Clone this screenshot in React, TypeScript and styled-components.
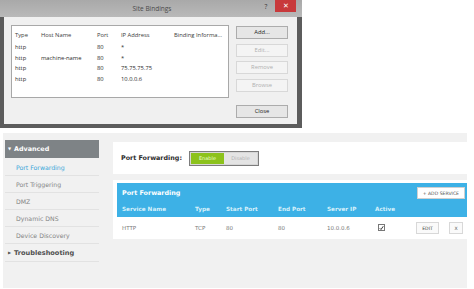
import styled, { createGlobalStyle } from "styled-components";

const Global = createGlobalStyle`
  html, body {
    margin: 0;
    padding: 0;
    background: #ffffff;
  }
  * {
    box-sizing: border-box;
  }
`;

const Page = styled.div`
  width: 474px;
  height: 289px;
  overflow: hidden;
  position: relative;
`;

/* ---------- windows dialog ---------- */

const Dialog = styled.div`
  width: 302px;
  height: 128px;
  background: #5c5c5c;
  padding: 0 5px 4px 4px;
  display: flex;
  flex-direction: column;
  font-family: "Open Sans", "Noto Sans", sans-serif;
`;

const TitleBar = styled.div`
  height: 17px;
  display: flex;
  align-items: flex-start;
  position: relative;
  background: linear-gradient(#a9a9a9, #b9b9b9);
  margin: 0 -5px 0 -4px;
  padding: 0 6px 0 4px;
`;

const Title = styled.div`
  flex: 1;
  text-align: center;
  font-size: 6.5px;
  color: #4a4a4a;
  line-height: 17px;
  padding-left: 40px;
`;

const Help = styled.div`
  width: 12px;
  font-size: 6.5px;
  color: #333;
  line-height: 14px;
  text-align: center;
  margin-right: 3px;
`;

const CloseX = styled.div`
  width: 21px;
  height: 12px;
  background: #c8393b;
  color: #fff;
  font-size: 7px;
  line-height: 12px;
  text-align: center;
`;

const DialogBody = styled.div`
  flex: 1;
  background: #f0f0f0;
  display: flex;
  padding: 8px 0 0 7px;
  gap: 7px;
`;

const ListBox = styled.div`
  width: 218px;
  height: 73px;
  background: #ffffff;
  border: 1px solid #a8a8a8;
  padding: 3px 0 0 3px;
`;

const ListRow = styled.div`
  display: grid;
  grid-template-columns: 26px 56px 24px 53px 1fr;
  height: 10.7px;
  line-height: 10.7px;
  font-size: 5.8px;
  color: #2a2a2a;
  white-space: nowrap;
  &:first-child {
    height: 13px;
    line-height: 13px;
    color: #3a3a3a;
  }
`;

const ButtonCol = styled.div`
  width: 52px;
  display: flex;
  flex-direction: column;
  padding-top: 1px;
`;

const WinButton = styled.div<{ $disabled?: boolean; $gap?: number }>`
  height: 13px;
  margin-bottom: ${(p) => (p.$gap ?? 4.6)}px;
  border: 1px solid ${(p) => (p.$disabled ? "#d8d8d8" : "#acacac")};
  background: ${(p) => (p.$disabled ? "#f4f4f4" : "#e6e6e6")};
  color: ${(p) => (p.$disabled ? "#b0b0b0" : "#222")};
  font-size: 5.8px;
  line-height: 11px;
  text-align: center;
`;

/* ---------- router page ---------- */

const Router = styled.div`
  position: absolute;
  left: 3px;
  top: 133px;
  width: 464px;
  height: 155px;
  background: #f1f1f1;
  display: flex;
  gap: 14px;
  padding: 7px 0 0 2px;
  font-family: "DejaVu Sans", Verdana, sans-serif;
`;

const Sidebar = styled.div`
  width: 94px;
  display: flex;
  flex-direction: column;
`;

const GroupHeader = styled.div`
  height: 18px;
  background: #7e8386;
  color: #ffffff;
  font-weight: bold;
  font-size: 6.4px;
  line-height: 18px;
  padding-left: 3px;
  margin-bottom: 0.5px;
`;

const Caret = styled.span<{ $dark?: boolean }>`
  display: inline-block;
  font-size: 4px;
  width: 6px;
  color: ${(p) => (p.$dark ? "#555" : "#fff")};
  vertical-align: 1px;
`;

const NavItem = styled.div<{ $active?: boolean }>`
  height: 17px;
  line-height: 17px;
  padding-left: 11px;
  font-size: 6.2px;
  color: ${(p) => (p.$active ? "#3aa6d9" : "#858585")};
  border-bottom: 1px solid #e2e2e2;
`;

const NavGroup = styled.div`
  height: 18px;
  line-height: 18px;
  padding-left: 3px;
  font-size: 6.6px;
  font-weight: bold;
  color: #505050;
  border-bottom: 1px solid #e2e2e2;
`;

const Main = styled.div`
  width: 354px;
  display: flex;
  flex-direction: column;
  gap: 6px;
  padding-top: 2px;
`;

const Panel = styled.div<{ $pad?: string }>`
  background: #ffffff;
  padding: ${(p) => p.$pad ?? "0"};
`;

const ToggleRow = styled.div`
  height: 32px;
  display: flex;
  align-items: center;
  padding-left: 8px;
  gap: 7px;
`;

const ToggleLabel = styled.div`
  font-size: 6.4px;
  font-weight: bold;
  color: #2c2c2c;
`;

const Toggle = styled.div`
  display: flex;
  border: 1px solid #7c7c7c;
  padding: 1px;
  background: #d6d6d6;
`;

const ToggleOpt = styled.div<{ $on?: boolean }>`
  width: 33px;
  height: 11px;
  line-height: 11px;
  text-align: center;
  font-size: 5px;
  background: ${(p) => (p.$on ? "#8cc21c" : "#e4e4e4")};
  color: ${(p) => (p.$on ? "#eaffcf" : "#b4b4b4")};
`;

const TableHead = styled.div`
  background: #3db1e6;
  padding: 2px 0 0 5px;
`;

const HeadTop = styled.div`
  height: 15px;
  display: flex;
  align-items: center;
  justify-content: space-between;
  padding-right: 2px;
`;

const HeadTitle = styled.div`
  font-size: 6.4px;
  font-weight: bold;
  color: #ffffff;
`;

const AddButton = styled.div`
  background: #ffffff;
  color: #555;
  font-size: 4.6px;
  height: 12px;
  line-height: 12px;
  padding: 0 5px;
  border: 1px solid #d0d0d0;
`;

const Cols = styled.div`
  display: grid;
  grid-template-columns: 73px 31px 52px 49px 48px 41px 33px 1fr;
  align-items: center;
`;

const HeadCols = styled(Cols)`
  height: 17px;
  font-size: 5.7px;
  font-weight: bold;
  color: #d6f0fb;
`;

const BodyCols = styled(Cols)`
  height: 21px;
  font-size: 5.5px;
  color: #7a7a7a;
  padding-left: 5px;
`;

const Check = styled.div`
  width: 7px;
  height: 7px;
  border: 1px solid #777;
  margin-left: 3px;
  display: flex;
  align-items: center;
  justify-content: center;
  background: #fff;
`;

const SmallBtn = styled.div<{ $w: number }>`
  width: ${(p) => p.$w}px;
  height: 12px;
  line-height: 11px;
  text-align: center;
  border: 1px solid #d8d8d8;
  background: #fafafa;
  font-size: 4.6px;
  color: #444;
`;

const bindings = [
  ["Type", "Host Name", "Port", "IP Address", "Binding Informa..."],
  ["http", "", "80", "*", ""],
  ["http", "machine-name", "80", "*", ""],
  ["http", "", "80", "75.75.75.75", ""],
  ["http", "", "80", "10.0.0.6", ""],
];

const navItems = ["Port Forwarding", "Port Triggering", "DMZ", "Dynamic DNS", "Device Discovery"];

export default function App() {
  return (
    <Page>
      <Global />
      <Dialog>
        <TitleBar>
          <Title>Site Bindings</Title>
          <Help>?</Help>
          <CloseX>✕</CloseX>
        </TitleBar>
        <DialogBody>
          <ListBox>
            {bindings.map((row, i) => (
              <ListRow key={i}>
                {row.map((c, j) => (
                  <span key={j}>{c}</span>
                ))}
              </ListRow>
            ))}
          </ListBox>
          <ButtonCol>
            <WinButton>Add...</WinButton>
            <WinButton $disabled>Edit...</WinButton>
            <WinButton $disabled>Remove</WinButton>
            <WinButton $disabled $gap={13}>Browse</WinButton>
            <WinButton>Close</WinButton>
          </ButtonCol>
        </DialogBody>
      </Dialog>

      <Router>
        <Sidebar>
          <GroupHeader>
            <Caret>▼</Caret>Advanced
          </GroupHeader>
          {navItems.map((n, i) => (
            <NavItem key={n} $active={i === 0}>
              {n}
            </NavItem>
          ))}
          <NavGroup>
            <Caret $dark>▶</Caret>Troubleshooting
          </NavGroup>
        </Sidebar>
        <Main>
          <Panel>
            <ToggleRow>
              <ToggleLabel>Port Forwarding:</ToggleLabel>
              <Toggle>
                <ToggleOpt $on>Enable</ToggleOpt>
                <ToggleOpt>Disable</ToggleOpt>
              </Toggle>
            </ToggleRow>
          </Panel>
          <Panel $pad="3px 0 1px 4px">
            <TableHead>
              <HeadTop>
                <HeadTitle>Port Forwarding</HeadTitle>
                <AddButton>+ ADD SERVICE</AddButton>
              </HeadTop>
              <HeadCols>
                <span>Service Name</span>
                <span>Type</span>
                <span>Start Port</span>
                <span>End Port</span>
                <span>Server IP</span>
                <span>Active</span>
                <span />
                <span />
              </HeadCols>
            </TableHead>
            <BodyCols>
              <span>HTTP</span>
              <span>TCP</span>
              <span>80</span>
              <span>80</span>
              <span>10.0.0.6</span>
              <Check>
                <svg width="6" height="6" viewBox="0 0 10 10">
                  <path d="M1.5 5.5 L4 8 L8.5 1.5" stroke="#222" strokeWidth="1.8" fill="none" />
                </svg>
              </Check>
              <SmallBtn $w={23}>EDIT</SmallBtn>
              <SmallBtn $w={14}>X</SmallBtn>
            </BodyCols>
          </Panel>
        </Main>
      </Router>
    </Page>
  );
}
